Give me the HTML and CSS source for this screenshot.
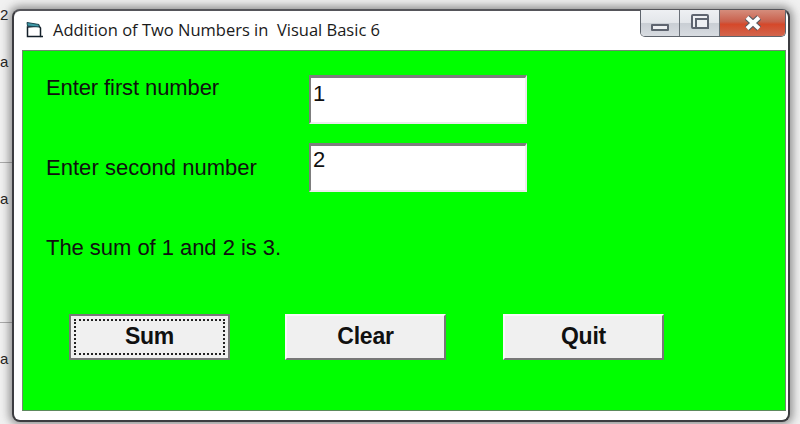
FILE: index.html
```html
<!DOCTYPE html>
<html lang="en">
<head>
<meta charset="utf-8">
<title>Addition of Two Numbers in Visual Basic 6</title>
<link rel="stylesheet" href="styles.css">
</head>
<body>
<div class="backdrop">
  <span class="frag f1">2</span>
  <span class="frag f2">a</span>
  <span class="frag f3">a</span>
  <span class="frag f4">a</span>
  <i class="rule r1"></i>
  <i class="rule r2"></i>
</div>
<div class="window">
  <div class="titlebar">
    <svg class="appicon" width="18" height="18" viewBox="0 0 18 18">
      <path d="M1.5 6V15.5H14.5V7L13 5Z" fill="#fff" stroke="#14202a" stroke-width="1.5"/>
      <path d="M1 1.5L13 3.5V6L1.5 5Z" fill="#3f9aa8" stroke="#1c4450" stroke-width="1"/>
      <path d="M14.5 15.5H17" stroke="#14202a" stroke-width="1.5"/>
    </svg>
    <span class="title">Addition of Two Numbers in&nbsp; Visual Basic 6</span>
    <div class="controls">
      <div class="ctl min"><i></i></div>
      <div class="ctl max"><i></i></div>
      <div class="ctl close">
        <svg width="20" height="16" viewBox="0 0 20 16"><path d="M4 2.5L16 13.5M16 2.5L4 13.5" stroke="#595d63" stroke-width="6.4"/><path d="M4 2.5L16 13.5M16 2.5L4 13.5" stroke="#fff" stroke-width="4"/></svg>
      </div>
    </div>
  </div>
  <div class="form">
    <div class="row">
      <label class="label l1">Enter first number</label>
      <div class="textbox">1</div>
    </div>
    <div class="row second">
      <label class="label l2">Enter second number</label>
      <div class="textbox">2</div>
    </div>
    <div class="result">The sum of 1 and 2 is 3.</div>
    <div class="buttons">
      <div class="btn focused"><span class="focus">Sum</span></div>
      <div class="btn">Clear</div>
      <div class="btn">Quit</div>
    </div>
  </div>
</div>
</body>
</html>
```
FILE: styles.css
```css
* { box-sizing: border-box; }
html, body { margin: 0; height: 100%; }
body {
  width: 800px; height: 424px; overflow: hidden; position: relative;
  background: #f1f1f1;
  font-family: "Liberation Sans", Arial, sans-serif;
  color: #101010;
  padding: 9px 0 0 12px;
}
.backdrop { position: absolute; inset: 0; }
.frag { position: absolute; left: 0; font-size: 15px; line-height: 16px; color: #222; }
.f1 { top: 7px; }
.f2 { top: 54px; }
.f3 { top: 191px; }
.f4 { top: 351px; }
.rule { position: absolute; left: 0; width: 12px; height: 1px; background: #aaa; }
.r1 { top: 162px; }
.r2 { top: 322px; }
.window {
  position: relative;
  width: 778px; height: 413px;
  background: #fff;
  border: 2px solid #3c3c40;
  border-top-color: #55555a;
  border-radius: 8px;
  box-shadow: 0 0 9px 3px rgba(70,70,70,.55);
  padding: 0 0 0 8px;
}
.titlebar { height: 39px; display: flex; align-items: center; padding: 0 0 3px 4px; position: relative; }
.appicon { margin-right: 9px; flex: none; margin-top: 2px; }
.title { font-family: "Open Sans", sans-serif; font-size: 16.5px; color: #1a1a1a; }
.controls {
  position: absolute; top: -1px; right: 2px;
  display: flex; height: 27px;
  border: 1px solid #5e646c; border-top: 0;
  border-radius: 0 0 5px 5px; overflow: hidden;
}
.ctl { display: flex; align-items: center; justify-content: center; }
.min, .max { width: 40px; background: linear-gradient(#eef0f3 0%, #e3e6ea 48%, #c9ced4 52%, #d8dce1 100%); border-right: 1px solid #6a7078; }
.min { width: 39px; }
.min i { display: block; width: 18px; height: 7px; border: 2px solid #5f6570; border-radius: 1px; background: #eef0f3; margin-top: 9px; }
.max i { display: block; width: 18px; height: 15px; border: 2px solid #5f6570; border-radius: 2px; position: relative; background: #eef0f3; margin-top: -3px; }
.max i::after { content: ""; position: absolute; left: 2px; top: 2px; width: 10px; height: 7px; border: 2px solid #5f6570; }
.close { width: 65px; background: linear-gradient(#d58d7c 0%, #c9604c 45%, #d5482a 55%, #d2654d 100%); }
.form {
  width: 764px; height: 361px;
  background: #00ff00;
  border: 1px solid #6f8a6f;
  border-bottom-color: #5c8a5c;
  padding: 24px 0 0 23px;
}
.row { display: flex; align-items: flex-start; }
.second { margin-top: 19px; }
.label { width: 263px; flex: none; font-size: 22px; line-height: 26px; }
.l1 { letter-spacing: -.1px; }
.l2 { margin-top: 12px; letter-spacing: .03px; }
.textbox {
  width: 218px; height: 49px;
  background: #fff;
  border: 2px solid #ececec;
  border-top: 3px solid #7d7d7d;
  border-left: 2px solid #7d7d7d;
  font-size: 22px; line-height: 26px; padding: 3px 0 0 2px;
}
.second .textbox { padding-top: 1px; }
.result { font-size: 22px; line-height: 26px; margin-top: 43px; letter-spacing: -.04px; }
.buttons { display: flex; gap: 57px; margin: 53px 0 0 23px; }
.btn {
  width: 161px; height: 46px;
  background: #f0f0f0;
  border: 2px solid; border-color: #fafafa #777 #777 #fafafa;
  font-size: 23px; font-weight: bold; letter-spacing: -.2px;
  display: flex; align-items: center; justify-content: center;
  padding-bottom: 1px;
}
.focused { border-color: #777; padding: 3px; margin-right: -2px; }
.focus { flex: 1; height: 100%; border: 2px dotted #222; display: flex; align-items: center; justify-content: center; padding-bottom: 1px; }
```
